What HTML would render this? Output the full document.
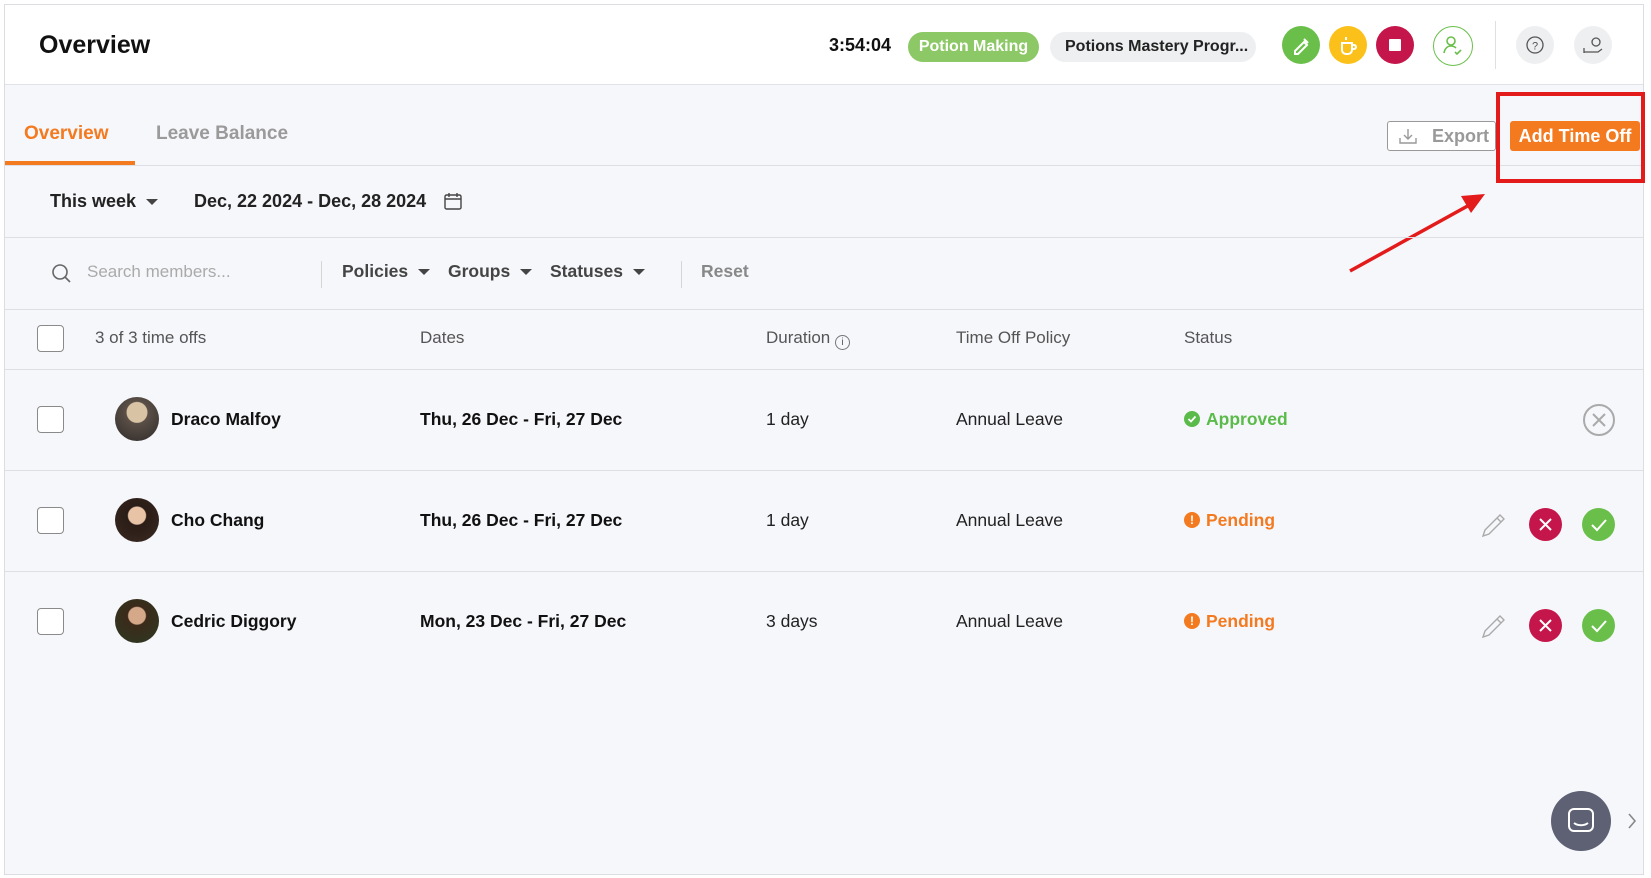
<!DOCTYPE html>
<html><head><meta charset="utf-8"><style>
*{box-sizing:border-box;margin:0;padding:0}
body{width:1651px;height:878px;background:#fff;font-family:"Liberation Sans",sans-serif;position:relative;overflow:hidden;color:#1f2330}
.panel{position:absolute;left:4px;top:4px;width:1640px;height:871px;border:1px solid #dcdde2;background:#f6f7fb}
.hdr{position:absolute;left:0;top:0;width:100%;height:80px;background:#fff;border-bottom:1px solid #e2e3e8}
.a{position:absolute;white-space:nowrap}
.circ{position:absolute;border-radius:50%}
.line{position:absolute;left:0;width:100%;height:1px;background:#dedfe4}
.cb{position:absolute;left:32px;width:27px;height:27px;border:1.5px solid #8a8a8a;border-radius:4px;background:#fff}
.av{position:absolute;left:110px;width:44px;height:44px;border-radius:50%}
.nm{font-size:17.5px;font-weight:bold;color:#111}
.cell{font-size:17.5px;color:#222}
.caret{display:inline-block;width:0;height:0;border-left:6px solid transparent;border-right:6px solid transparent;border-top:6px solid #444;margin-left:10px;vertical-align:middle}
</style></head><body>
<div class="panel">
 <div class="hdr">
  <div class="a" style="left:34px;top:26px;font-size:25px;font-weight:bold;color:#111">Overview</div>
  <div class="a" style="left:824px;top:30px;font-size:18px;font-weight:bold;color:#111">3:54:04</div>
  <div class="a" style="left:903px;top:27px;width:131px;height:30px;border-radius:15px;background:#8cc866;color:#fff;font-size:16px;font-weight:bold;text-align:center;line-height:30px">Potion Making</div>
  <div class="a" style="left:1045px;top:27px;width:206px;height:30px;border-radius:15px;background:#eeeff1;color:#222;font-size:16px;font-weight:bold;padding-left:15px;line-height:30px">Potions Mastery Progr...</div>
  <div class="circ" style="left:1277px;top:21px;width:38px;height:38px;background:#6abf4b"><svg width="38" height="38"><path d="M13 25l9-9 3 3-9 9h-3z M22 13l4 4" stroke="#fff" stroke-width="2" fill="none"/></svg></div>
  <div class="circ" style="left:1324px;top:21px;width:38px;height:38px;background:#fbc11a"><svg width="38" height="38"><path d="M13 17h10v7a4 4 0 0 1-4 4h-2a4 4 0 0 1-4-4z M23 19h2a2 2 0 0 1 0 4h-2 M17 11v3" stroke="#fff" stroke-width="2" fill="none"/></svg></div>
  <div class="circ" style="left:1371px;top:21px;width:38px;height:38px;background:#c4164a"><div style="position:absolute;left:13px;top:13px;width:12px;height:12px;background:#fff;border-radius:1px"></div></div>
  <div class="circ" style="left:1428px;top:21px;width:40px;height:40px;border:1.5px solid #6abf4b;background:#fff"><svg width="38" height="38"><circle cx="17" cy="14" r="4" stroke="#6abf4b" stroke-width="1.6" fill="none"/><path d="M10 26c1-5 4-7 7-7s4 1 5 2 M21 25l2 2 4-4" stroke="#6abf4b" stroke-width="1.6" fill="none"/></svg></div>
  <div class="a" style="left:1490px;top:16px;width:1px;height:48px;background:#e0e0e0"></div>
  <div class="circ" style="left:1511px;top:21px;width:38px;height:38px;background:#eeeff1"><svg width="38" height="38"><circle cx="19" cy="19" r="8" stroke="#555" stroke-width="1.3" fill="none"/><text x="19" y="23.5" font-size="11" text-anchor="middle" fill="#555" font-family="Liberation Sans">?</text></svg></div>
  <div class="circ" style="left:1569px;top:21px;width:38px;height:38px;background:#eeeff1"><svg width="38" height="38"><circle cx="22" cy="16" r="4" stroke="#555" stroke-width="1.3" fill="none"/><path d="M10 26h14l4-3 M10 22v5" stroke="#555" stroke-width="1.3" fill="none"/></svg></div>
 </div>
 <div class="a" style="left:19px;top:118px;font-size:19px;font-weight:bold;color:#f47a20">Overview</div>
 <div class="a" style="left:151px;top:118px;font-size:19px;font-weight:bold;color:#9a9a9a">Leave Balance</div>
 <div class="a" style="left:0;top:156px;width:130px;height:4px;background:#f47a20"></div>
 <div class="line" style="top:160px"></div>
 <div class="a" style="left:1382px;top:116px;width:109px;height:30px;border:1px solid #999;border-radius:3px;background:#fff;font-size:18px;font-weight:bold;color:#999;line-height:28px;padding-left:44px">Export
  <svg style="position:absolute;left:10px;top:5px" width="20" height="18"><path d="M10 2v10 M6 8l4 4 4-4 M2 11v5h16v-5" stroke="#999" stroke-width="1.4" fill="none"/></svg></div>
 <div class="a" style="left:1505px;top:116px;width:130px;height:30px;border-radius:3px;background:#f47a20;color:#fff;font-size:18px;font-weight:bold;text-align:center;line-height:30px">Add Time Off</div>
 <div class="a" style="left:1491px;top:87px;width:149px;height:91px;border:4px solid #e31b1b"></div>
 <svg class="a" style="left:1335px;top:180px" width="160" height="100"><line x1="10" y1="86" x2="133" y2="18" stroke="#e31b1b" stroke-width="3.5"/><path d="M145 9l-24 2 10 17z" fill="#e31b1b"/></svg>
 <div class="a" style="left:45px;top:186px;font-size:18px;font-weight:bold;color:#222">This week<span class="caret"></span></div>
 <div class="a" style="left:189px;top:186px;font-size:18px;font-weight:bold;color:#222">Dec, 22 2024 - Dec, 28 2024</div>
 <svg class="a" style="left:438px;top:186px" width="20" height="20"><rect x="2" y="4" width="16" height="14" rx="1.5" stroke="#444" stroke-width="1.4" fill="none"/><path d="M2 8h16 M6 2v4 M14 2v4" stroke="#444" stroke-width="1.4"/></svg>
 <div class="line" style="top:232px"></div>
 <svg class="a" style="left:46px;top:258px" width="22" height="22"><circle cx="9" cy="9" r="7" stroke="#666" stroke-width="1.6" fill="none"/><path d="M14 14l5 5" stroke="#666" stroke-width="1.6"/></svg>
 <div class="a" style="left:82px;top:257px;font-size:17px;color:#aaa">Search members...</div>
 <div class="a" style="left:316px;top:256px;width:1px;height:27px;background:#d5d5d5"></div>
 <div class="a" style="left:337px;top:256px;font-size:17.5px;font-weight:bold;color:#444">Policies<span class="caret"></span></div>
 <div class="a" style="left:443px;top:256px;font-size:17.5px;font-weight:bold;color:#444">Groups<span class="caret"></span></div>
 <div class="a" style="left:545px;top:256px;font-size:17.5px;font-weight:bold;color:#444">Statuses<span class="caret"></span></div>
 <div class="a" style="left:676px;top:256px;width:1px;height:27px;background:#d5d5d5"></div>
 <div class="a" style="left:696px;top:256px;font-size:17.5px;font-weight:bold;color:#888">Reset</div>
 <div class="line" style="top:304px"></div>
 <div class="cb" style="top:320px"></div>
 <div class="a" style="left:90px;top:323px;font-size:17px;color:#555">3 of 3 time offs</div>
 <div class="a" style="left:415px;top:323px;font-size:17px;color:#555">Dates</div>
 <div class="a" style="left:761px;top:323px;font-size:17px;color:#555">Duration <span style="display:inline-block;width:15px;height:15px;border:1px solid #777;border-radius:50%;font-size:10px;text-align:center;line-height:13px;vertical-align:-2px">i</span></div>
 <div class="a" style="left:951px;top:323px;font-size:17px;color:#555">Time Off Policy</div>
 <div class="a" style="left:1179px;top:323px;font-size:17px;color:#555">Status</div>
 <div class="line" style="top:364px"></div>

 <div class="cb" style="top:401px"></div>
 <div class="av" style="top:392px;background:radial-gradient(circle at 50% 35%,#d9c3a5 0 28%,#5b5048 30%,#2e2a28 100%)"></div>
 <div class="a nm" style="left:166px;top:404px">Draco Malfoy</div>
 <div class="a nm" style="left:415px;top:404px">Thu, 26 Dec - Fri, 27 Dec</div>
 <div class="a cell" style="left:761px;top:404px">1 day</div>
 <div class="a cell" style="left:951px;top:404px">Annual Leave</div>
 <div class="a" style="left:1179px;top:406px;width:16px;height:16px;border-radius:50%;background:#5bbb4a"><svg width="16" height="16"><path d="M4.5 8l2.5 2.5 4.5-5" stroke="#fff" stroke-width="1.8" fill="none"/></svg></div>
 <div class="a" style="left:1201px;top:404px;font-size:17.5px;font-weight:bold;color:#5bbb4a">Approved</div>
 <svg class="a" style="left:1577px;top:398px" width="34" height="34"><circle cx="17" cy="17" r="15" stroke="#aaa" stroke-width="2" fill="none"/><path d="M11 11l12 12 M23 11l-12 12" stroke="#aaa" stroke-width="2"/></svg>
 <div class="line" style="top:465px"></div>

 <div class="cb" style="top:502px"></div>
 <div class="av" style="top:493px;background:radial-gradient(circle at 50% 40%,#e8c3a6 0 25%,#2a1c16 28%,#3a2a22 100%)"></div>
 <div class="a nm" style="left:166px;top:505px">Cho Chang</div>
 <div class="a nm" style="left:415px;top:505px">Thu, 26 Dec - Fri, 27 Dec</div>
 <div class="a cell" style="left:761px;top:505px">1 day</div>
 <div class="a cell" style="left:951px;top:505px">Annual Leave</div>
 <div class="a" style="left:1179px;top:507px;width:16px;height:16px;border-radius:50%;background:#f47a20;color:#fff;font-size:12px;font-weight:bold;text-align:center;line-height:16px">!</div>
 <div class="a" style="left:1201px;top:505px;font-size:17.5px;font-weight:bold;color:#f47a20">Pending</div>
 <svg class="a" style="left:1473px;top:505px" width="30" height="30"><path d="M5 26l2-6 15-15 4 4-15 15z M19 8l4 4" stroke="#aaa" stroke-width="1.4" fill="none"/></svg>
 <div class="circ" style="left:1524px;top:503px;width:33px;height:33px;background:#c4164a"><svg width="33" height="33"><path d="M11 11l11 11 M22 11l-11 11" stroke="#fff" stroke-width="2"/></svg></div>
 <div class="circ" style="left:1577px;top:503px;width:33px;height:33px;background:#6abf4b"><svg width="33" height="33"><path d="M10 17l5 5 9-10" stroke="#fff" stroke-width="2" fill="none"/></svg></div>
 <div class="line" style="top:566px"></div>

 <div class="cb" style="top:603px"></div>
 <div class="av" style="top:594px;background:radial-gradient(circle at 50% 38%,#d4a888 0 24%,#3b2a1a 27%,#2c3a22 100%)"></div>
 <div class="a nm" style="left:166px;top:606px">Cedric Diggory</div>
 <div class="a nm" style="left:415px;top:606px">Mon, 23 Dec - Fri, 27 Dec</div>
 <div class="a cell" style="left:761px;top:606px">3 days</div>
 <div class="a cell" style="left:951px;top:606px">Annual Leave</div>
 <div class="a" style="left:1179px;top:608px;width:16px;height:16px;border-radius:50%;background:#f47a20;color:#fff;font-size:12px;font-weight:bold;text-align:center;line-height:16px">!</div>
 <div class="a" style="left:1201px;top:606px;font-size:17.5px;font-weight:bold;color:#f47a20">Pending</div>
 <svg class="a" style="left:1473px;top:606px" width="30" height="30"><path d="M5 26l2-6 15-15 4 4-15 15z M19 8l4 4" stroke="#aaa" stroke-width="1.4" fill="none"/></svg>
 <div class="circ" style="left:1524px;top:604px;width:33px;height:33px;background:#c4164a"><svg width="33" height="33"><path d="M11 11l11 11 M22 11l-11 11" stroke="#fff" stroke-width="2"/></svg></div>
 <div class="circ" style="left:1577px;top:604px;width:33px;height:33px;background:#6abf4b"><svg width="33" height="33"><path d="M10 17l5 5 9-10" stroke="#fff" stroke-width="2" fill="none"/></svg></div>

 <div class="circ" style="left:1546px;top:786px;width:60px;height:60px;background:#5d6173"><svg width="60" height="60"><rect x="18" y="18" width="24" height="22" rx="5" stroke="#fff" stroke-width="2" fill="none"/><path d="M23 32c4 3 10 3 14 0" stroke="#fff" stroke-width="2" fill="none"/></svg></div>
 <svg class="a" style="left:1620px;top:806px" width="14" height="20"><path d="M4 3l6 7-6 7" stroke="#888" stroke-width="1.6" fill="none"/></svg>
</div>
</body></html>
